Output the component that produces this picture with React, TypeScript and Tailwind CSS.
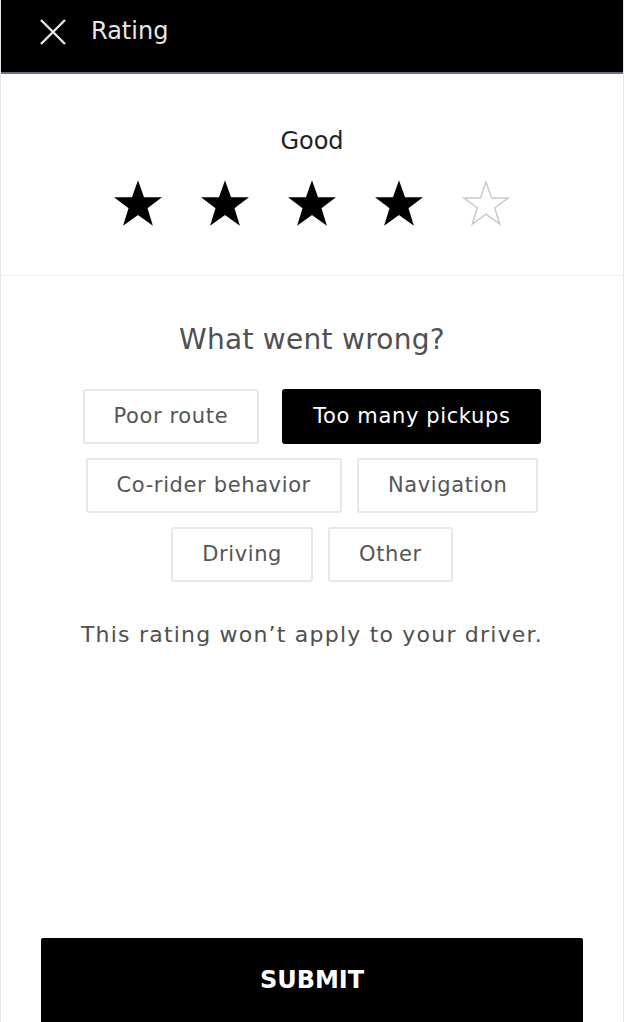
import { useState } from 'react'

const razones = [
  ['Poor route', 'Too many pickups'],
  ['Co-rider behavior', 'Navigation'],
  ['Driving', 'Other'],
]

function Estrella({ llena }: { llena: boolean }) {
  return (
    <svg width="50" height="48" viewBox="0 0 24 23">
      <polygon
        points="12,1 14.7,8.6 22.6,8.6 16.2,13.4 18.6,21.2 12,16.4 5.4,21.2 7.8,13.4 1.4,8.6 9.3,8.6"
        fill={llena ? '#000' : 'none'}
        stroke={llena ? '#000' : '#c8c8c8'}
        strokeWidth={llena ? 0.6 : 0.7}
        strokeLinejoin="miter"
      />
    </svg>
  )
}

export default function App() {
  const [rating, setRating] = useState(4)
  const [elegida, setElegida] = useState('Too many pickups')

  return (
    <div
      className="flex h-[1022px] w-[624px] flex-col overflow-hidden border-x border-gray-200 bg-white"
      style={{ fontFamily: '"DejaVu Sans", "Noto Sans", sans-serif' }}
    >
      {/* Cabecera */}
      <div className="flex h-[74px] shrink-0 items-center border-b-2 border-gray-500 bg-black pl-[37px]">
        <svg width="30" height="30" viewBox="0 0 30 30" className="mb-[8px]">
          <path d="M3 3 L27 27 M27 3 L3 27" stroke="#e8e8e8" strokeWidth="2.4" />
        </svg>
        <span className="ml-[23px] mb-[10px] text-[24px] text-gray-200">Rating</span>
      </div>

      {/* Estrellas */}
      <div className="flex flex-col items-center border-b border-gray-100 pt-[50px] pb-[47px]">
        <p className="text-[24px] leading-[34px] text-[#222]">Good</p>
        <div className="mt-[22px] flex gap-[37px]">
          {[1, 2, 3, 4, 5].map((n) => (
            <button key={n} onClick={() => setRating(n)}>
              <Estrella llena={n <= rating} />
            </button>
          ))}
        </div>
      </div>

      {/* Motivos */}
      <div className="flex flex-col items-center pt-[44px]">
        <p className="text-[28px] leading-[40px] tracking-[0.01em] text-[#505050]">What went wrong?</p>
        <div className="mt-[29px] flex flex-col items-center gap-[14px]">
          {razones.map((fila, i) => (
            <div key={i} className={`flex ${i === 0 ? 'gap-[23px]' : 'gap-[15px]'}`}>
              {fila.map((r) => {
                const activa = r === elegida
                return (
                  <button
                    key={r}
                    onClick={() => setElegida(r)}
                    className={`h-[55px] rounded-[3px] border-2 px-[29px] text-[21px] tracking-[0.03em] ${
                      activa
                        ? 'border-black bg-black text-white'
                        : 'border-gray-200 bg-white text-[#555]'
                    }`}
                  >
                    {r}
                  </button>
                )
              })}
            </div>
          ))}
        </div>
        <p className="mt-[36px] text-[22px] tracking-[0.055em] text-[#505050]">
          This rating won’t apply to your driver.
        </p>
      </div>

      <div className="flex-1" />

      {/* Pie */}
      <div className="px-[40px]">
        <button className="mb-[-10px] h-[94px] w-full rounded-[2px] bg-black pb-[10px] text-[24px] font-bold text-white">
          SUBMIT
        </button>
      </div>
    </div>
  )
}
